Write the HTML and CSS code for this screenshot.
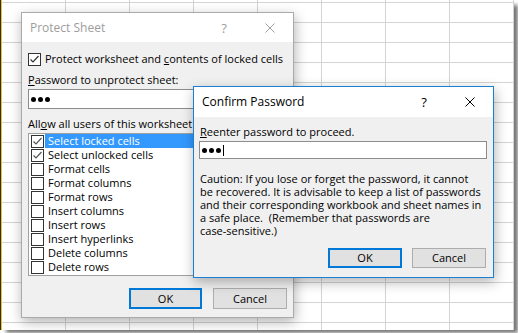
FILE: index.html
```html
<!DOCTYPE html>
<html lang="en">
<head>
<meta charset="utf-8">
<title>Protect Sheet</title>
<link rel="stylesheet" href="styles.css">
</head>
<body>
<div class="desk">
  <div class="dlg protect">
    <div class="titlebar">
      <span class="title">Protect Sheet</span>
      <span class="tb-btn help">?</span>
      <span class="tb-btn close"><svg width="10" height="10" viewBox="0 0 10 10"><path d="M0.5 0.5L9.5 9.5M9.5 0.5L0.5 9.5" stroke="currentColor" stroke-width="1" fill="none"/></svg></span>
    </div>
    <div class="body">
      <div class="chk-row">
        <span class="cb"><svg width="11" height="11" viewBox="0 0 11 11"><path d="M1.5 5.5L4 8L9.5 2" stroke="#333" stroke-width="1.2" fill="none"/></svg></span>
        <span class="chk-text">Protect worksheet and <u>c</u>ontents of locked cells</span>
      </div>
      <div class="lbl lbl-pw"><u>P</u>assword to unprotect sheet:</div>
      <div class="input input-pw">
        <span class="dots" aria-label="password"><i class="dot"></i><i class="dot"></i><i class="dot"></i></span>
      </div>
      <div class="lbl lbl-allow">All<u>o</u>w all users of this worksheet to:</div>
      <ul class="list">
        <li class="item"><span class="cb"><svg width="11" height="11" viewBox="0 0 11 11"><path d="M1.5 5.5L4 8L9.5 2" stroke="#555" stroke-width="1.2" fill="none"/></svg></span><span class="item-text sel">Select locked cells</span></li>
        <li class="item"><span class="cb"><svg width="11" height="11" viewBox="0 0 11 11"><path d="M1.5 5.5L4 8L9.5 2" stroke="#555" stroke-width="1.2" fill="none"/></svg></span><span class="item-text">Select unlocked cells</span></li>
        <li class="item"><span class="cb"></span><span class="item-text">Format cells</span></li>
        <li class="item"><span class="cb"></span><span class="item-text">Format columns</span></li>
        <li class="item"><span class="cb"></span><span class="item-text">Format rows</span></li>
        <li class="item"><span class="cb"></span><span class="item-text">Insert columns</span></li>
        <li class="item"><span class="cb"></span><span class="item-text">Insert rows</span></li>
        <li class="item"><span class="cb"></span><span class="item-text">Insert hyperlinks</span></li>
        <li class="item"><span class="cb"></span><span class="item-text">Delete columns</span></li>
        <li class="item"><span class="cb"></span><span class="item-text">Delete rows</span></li>
      </ul>
      <div class="buttons buttons-protect">
        <button class="btn btn-default">OK</button>
        <button class="btn">Cancel</button>
      </div>
    </div>
  </div>

  <div class="dlg confirm">
    <div class="titlebar">
      <span class="title">Confirm Password</span>
      <span class="tb-btn help">?</span>
      <span class="tb-btn close"><svg width="10" height="10" viewBox="0 0 10 10"><path d="M0.5 0.5L9.5 9.5M9.5 0.5L0.5 9.5" stroke="currentColor" stroke-width="1" fill="none"/></svg></span>
    </div>
    <div class="body">
      <div class="lbl"><u>R</u>eenter password to proceed.</div>
      <div class="input input-confirm">
        <span class="dots" aria-label="password"><i class="dot"></i><i class="dot"></i><i class="dot"></i></span><span class="caret"></span>
      </div>
      <p class="caution">Caution: If you lose or forget the password, it cannot<br>be recovered. It is advisable to keep a list of passwords<br>and their corresponding workbook and sheet names in<br>a safe place.&nbsp; (Remember that passwords are<br>case-sensitive.)</p>
      <div class="buttons buttons-confirm">
        <button class="btn btn-default">OK</button>
        <button class="btn">Cancel</button>
      </div>
    </div>
  </div>
</div>
</body>
</html>
```

FILE: styles.css
```css
* { box-sizing: border-box; }

body {
  margin: 0;
  width: 518px;
  height: 333px;
  overflow: hidden;
  background: #fff;
  font-family: "Open Sans", "Noto Sans", sans-serif;
  font-size: 11px;
  line-height: 14px;
  color: #000;
}

.desk {
  position: relative;
  width: 514px;
  height: 330px;
  background-color: #fff;
  background-image:
    linear-gradient(to right, #2b2b2b 0 1px, #f0c419 1px 2px, transparent 2px),
    linear-gradient(to right, #d4d4d4 0 1px, transparent 1px),
    linear-gradient(to bottom, #d4d4d4 0 1px, transparent 1px);
  background-size: 2px 100%, 64px 100%, 100% 20px;
  background-position: 0 0, 1px 0, 0 2px;
  background-repeat: no-repeat, repeat-x, repeat-y;
  box-shadow: 5px 4px 4px -1px rgba(0, 0, 0, 0.55);
}

.dlg {
  position: absolute;
  background: #f0f0f0;
  display: flex;
  flex-direction: column;
}

.protect {
  left: 21px;
  top: 12px;
  width: 273px;
  height: 306px;
  border: 1px solid #aaaaaa;
  box-shadow: 1px 4px 12px rgba(0, 0, 0, 0.3);
}

.confirm {
  left: 193px;
  top: 86px;
  width: 301px;
  height: 192px;
  border: 1px solid #1a7fd4;
  box-shadow: 1px 4px 12px rgba(0, 0, 0, 0.3);
}

.titlebar {
  flex: none;
  display: flex;
  align-items: center;
  background: #fff;
}

.protect .titlebar { height: 29px; color: #9d9d9d; }
.confirm .titlebar { height: 30px; color: #000; }

.title {
  flex: 1;
  padding-left: 8px;
  font-size: 12px;
}

.tb-btn {
  width: 46px;
  height: 100%;
  display: flex;
  align-items: center;
  justify-content: center;
  font-size: 13px;
}

.body {
  flex: 1;
  display: flex;
  flex-direction: column;
}

.protect .body { padding: 10px 6px 0 6px; }
.confirm .body { padding: 8px 6px 0 6px; }

u { text-decoration: underline; text-underline-offset: 1px; }

.chk-row {
  display: flex;
  align-items: center;
  height: 14px;
}

.chk-text { padding-left: 4px; }

.cb {
  flex: none;
  width: 13px;
  height: 13px;
  border: 1px solid #333;
  background: #fff;
  display: flex;
  align-items: center;
  justify-content: center;
}

.lbl-pw { margin-top: 7px; }
.lbl-allow { margin-top: 8px; }

.input {
  background: #fff;
  border: 1px solid #8c8c8c;
  display: flex;
  align-items: center;
  padding-left: 2px;
}

.input-pw { margin-top: 2px; height: 20px; }
.input-confirm { margin: 2px 0 0 -1px; height: 18px; }

.dots {
  display: flex;
  gap: 2px;
}

.dot {
  display: block;
  width: 5px;
  height: 5px;
  border-radius: 50%;
  background: #000;
}

.caret {
  width: 1px;
  height: 11px;
  background: #000;
  margin-left: 2px;
}

.list {
  margin: 2px 0 0 0;
  padding: 0 0 0 2px;
  list-style: none;
  height: 143px;
  overflow: hidden;
  background: #fff;
  border: 1px solid #a0a0a0;
}

.item {
  display: flex;
  align-items: center;
  height: 14px;
}

.item-text {
  flex: 1;
  height: 14px;
  margin-left: 1px;
  padding-left: 3px;
  white-space: nowrap;
}

.item-text.sel {
  background: #3399ff;
  color: #fff;
}

.caution {
  margin: 13px 0 0 0;
  line-height: 13px;
  white-space: nowrap;
}

.buttons {
  display: flex;
  justify-content: flex-end;
}

.buttons-protect { margin-top: 12px; gap: 11px; }
.buttons-confirm { margin-top: 11px; gap: 10px; margin-right: 1px; }

.btn {
  font: inherit;
  color: #000;
  background: #e1e1e1;
  border: 1px solid #adadad;
  padding: 0;
  width: 74px;
  height: 21px;
}

.buttons-protect .btn-default { width: 73px; }
.buttons-confirm .btn { height: 20px; }

.btn-default { border: 2px solid #0078d7; }
```
